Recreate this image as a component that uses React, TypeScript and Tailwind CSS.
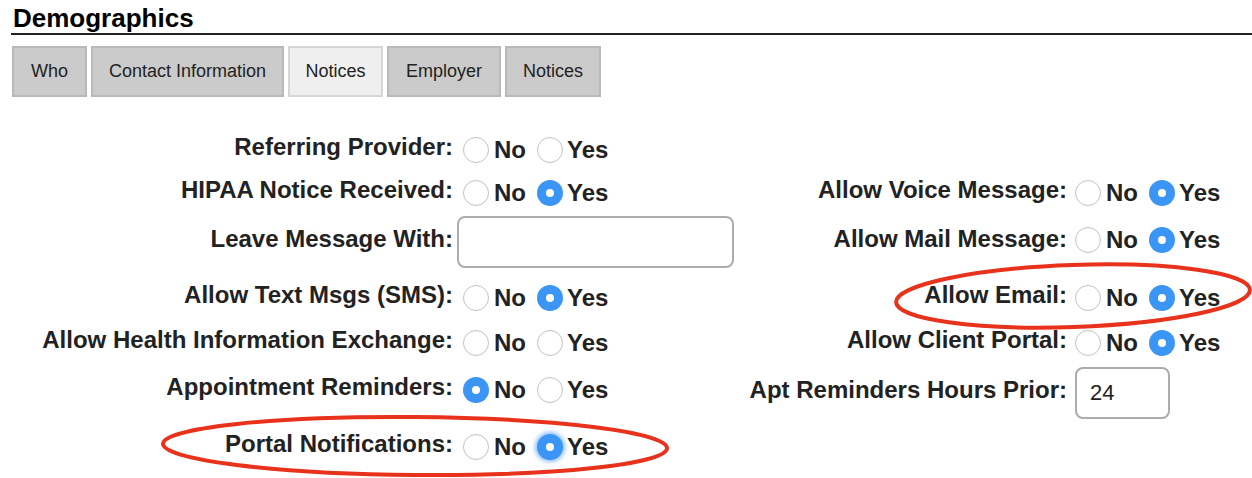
import React from "react";

type Pick = "no" | "yes" | null;

function Radio({ on, glow, className = "" }: { on: boolean; glow?: boolean; className?: string }) {
  if (on) {
    return (
      <span
        className={`flex h-[26px] w-[26px] shrink-0 items-center justify-center rounded-full bg-[#3b95f5] ${className} ${
          glow ? "shadow-[0_0_4px_2px_rgba(59,149,245,0.6)]" : ""
        }`}
      >
        <span className="h-[8px] w-[8px] rounded-full bg-white" />
      </span>
    );
  }
  return (
    <span
      className={`block h-[26px] w-[26px] shrink-0 rounded-full border-[1.5px] border-[#c2c2c2] bg-white ${className}`}
    />
  );
}

function YesNo({ value, glow }: { value: Pick; glow?: boolean }) {
  return (
    <div className="flex items-center">
      <Radio on={value === "no"} />
      <span className="ml-[5px] font-bold">No</span>
      <Radio on={value === "yes"} glow={glow} className="ml-[11px]" />
      <span className="ml-[4px] font-bold">Yes</span>
    </div>
  );
}

function Label({ children }: { children: React.ReactNode }) {
  return <div className="pb-[6px] text-right font-bold whitespace-nowrap">{children}</div>;
}

const tabs = [
  { name: "Who", w: "w-[75px]", active: false },
  { name: "Contact Information", w: "w-[193px]", active: false },
  { name: "Notices", w: "w-[95px]", active: true },
  { name: "Employer", w: "w-[114px]", active: false },
  { name: "Notices", w: "w-[96px]", active: false },
];

export default function App() {
  return (
    <div
      className="relative h-[478px] w-[1252px] overflow-hidden bg-white text-[24px] text-[#222]"
      style={{ fontFamily: '"Liberation Sans", Arial, sans-serif' }}
    >
      <div className="ml-[11px] pt-[4px]">
        <h1 className="border-b-2 border-[#222] pl-[2px] text-[26px] leading-[29px] font-bold text-black">
          Demographics
        </h1>

        <div className="mt-[11px] ml-[1px] flex gap-[4px]">
          {tabs.map((t, i) => (
            <div
              key={i}
              className={`flex h-[51px] items-center justify-center border-2 text-[18px] text-[#222] ${t.w} ${
                t.active ? "border-[#d6d6d6] bg-[#efefef]" : "border-[#b9b9b9] bg-[#cbcbcb]"
              }`}
            >
              {t.name}
            </div>
          ))}
        </div>
      </div>

      <div className="mt-[31px]">
        <div className="grid h-[44px] grid-cols-[453px_287px_327px_1fr] items-center">
          <Label>Referring Provider:</Label>
          <div className="pl-[10px]">
            <YesNo value={null} />
          </div>
          <div />
          <div />
        </div>

        <div className="grid h-[42px] grid-cols-[453px_287px_327px_1fr] items-center">
          <Label>HIPAA Notice Received:</Label>
          <div className="pl-[10px]">
            <YesNo value="yes" />
          </div>
          <Label>Allow Voice Message:</Label>
          <div className="pl-[8px]">
            <YesNo value="yes" />
          </div>
        </div>

        <div className="mt-[2px] grid h-[52px] grid-cols-[453px_287px_327px_1fr] items-center">
          <Label>Leave Message With:</Label>
          <div className="pl-[4px]">
            <input
              className="h-[52px] w-[277px] rounded-[8px] border-2 border-[#acacac] bg-white px-3 text-[22px] outline-none"
              defaultValue=""
            />
          </div>
          <Label>Allow Mail Message:</Label>
          <div className="pb-[4px] pl-[8px]">
            <YesNo value="yes" />
          </div>
        </div>

        <div className="mt-[8px] grid h-[44px] grid-cols-[453px_287px_327px_1fr] items-center">
          <Label>Allow Text Msgs (SMS):</Label>
          <div className="pl-[10px]">
            <YesNo value="yes" />
          </div>
          <Label>Allow Email:</Label>
          <div className="pl-[8px]">
            <YesNo value="yes" />
          </div>
        </div>

        <div className="grid h-[46px] grid-cols-[453px_287px_327px_1fr] items-center">
          <Label>Allow Health Information Exchange:</Label>
          <div className="pl-[10px]">
            <YesNo value={null} />
          </div>
          <Label>Allow Client Portal:</Label>
          <div className="pl-[8px]">
            <YesNo value="yes" />
          </div>
        </div>

        <div className="mt-[1px] grid h-[52px] grid-cols-[453px_287px_327px_1fr] items-center">
          <div className="pb-[12px] text-right font-bold whitespace-nowrap">Appointment Reminders:</div>
          <div className="pb-[6px] pl-[10px]">
            <YesNo value="no" />
          </div>
          <Label>Apt Reminders Hours Prior:</Label>
          <div className="pl-[8px]">
            <input
              className="h-[52px] w-[95px] rounded-[8px] border-2 border-[#acacac] bg-white px-[13px] text-[22px] text-[#222] outline-none"
              defaultValue="24"
            />
          </div>
        </div>

        <div className="mt-[5px] grid h-[46px] grid-cols-[453px_287px_327px_1fr] items-center">
          <Label>Portal Notifications:</Label>
          <div className="pl-[10px]">
            <YesNo value="yes" glow />
          </div>
          <div />
          <div />
        </div>
      </div>

      {/* hand-drawn annotation rings */}
      <svg className="pointer-events-none absolute inset-0" width="1252" height="478" viewBox="0 0 1252 478">
        <ellipse
          cx="1073"
          cy="296"
          rx="177"
          ry="31"
          transform="rotate(-2 1073 296)"
          fill="none"
          stroke="#e8321c"
          strokeWidth="4"
        />
        <ellipse
          cx="415"
          cy="446"
          rx="252"
          ry="29"
          transform="rotate(0.5 415 446)"
          fill="none"
          stroke="#e8321c"
          strokeWidth="4"
        />
      </svg>
    </div>
  );
}
